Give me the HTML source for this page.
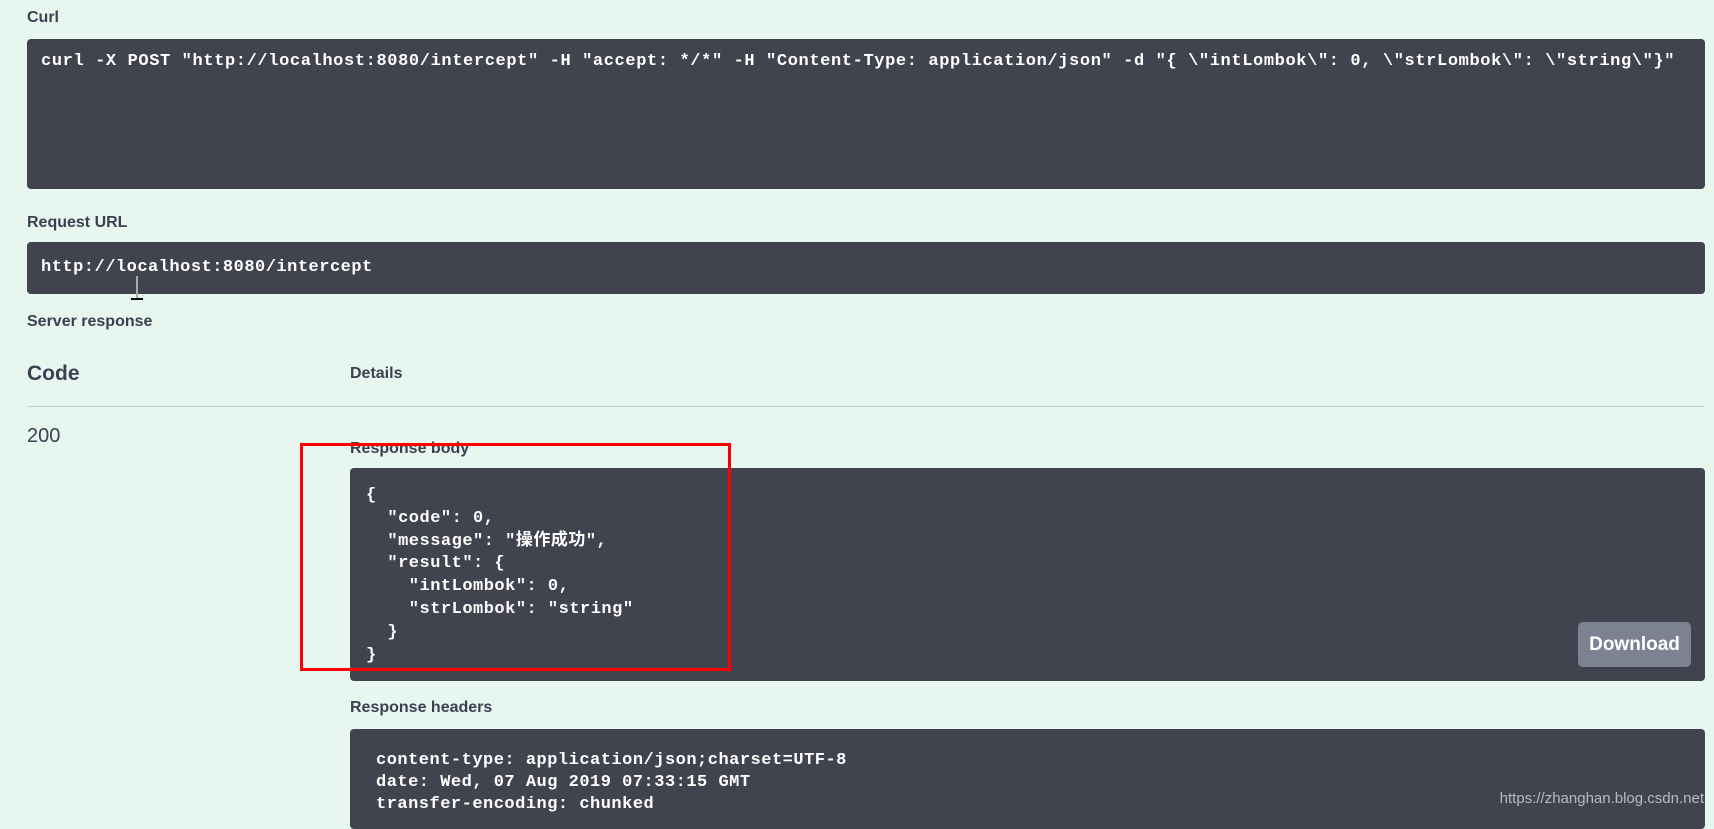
<!DOCTYPE html>
<html><head><meta charset="utf-8"><style>
*{margin:0;padding:0;box-sizing:border-box}
html,body{width:1714px;height:818px;overflow:hidden;background:#e8f6f0;font-family:"Liberation Sans","Noto Sans CJK SC",sans-serif;color:#3b4151}
.lbl{position:absolute;font-weight:bold;font-size:16px;color:#3b4151}
.box{position:absolute;background:#41444e;border-radius:4px}
.mono{font-family:"Liberation Mono","Noto Sans CJK SC",monospace;font-weight:bold;font-size:17px;color:#fff;letter-spacing:0.5px;white-space:pre;position:absolute}
</style></head><body>
<div class="lbl" style="left:27px;top:9px">Curl</div>
<div class="box" style="left:27px;top:39px;width:1678px;height:150px"></div>
<div class="mono" style="left:41px;top:52px;letter-spacing:0.62px">curl -X POST "http://localhost:8080/intercept" -H "accept: */*" -H "Content-Type: application/json" -d "{ \"intLombok\": 0, \"strLombok\": \"string\"}"</div>
<div class="lbl" style="left:27px;top:214px">Request URL</div>
<div class="box" style="left:27px;top:242px;width:1678px;height:52px"></div>
<div class="mono" style="left:41px;top:258px">http://localhost:8080/intercept</div>
<div style="position:absolute;left:136px;top:276px;width:2px;height:22px;background:#aaa"></div>
<div style="position:absolute;left:131px;top:298px;width:12px;height:2px;background:#000"></div>
<div class="lbl" style="left:27px;top:313px">Server response</div>
<div class="lbl" style="left:27px;top:362px;font-size:21px">Code</div>
<div class="lbl" style="left:350px;top:365px">Details</div>
<div style="position:absolute;left:27px;top:406px;width:1678px;height:1px;background:#c8d0cc"></div>
<div style="position:absolute;left:27px;top:425px;font-size:20px">200</div>
<div class="lbl" style="left:350px;top:440px">Response body</div>
<div class="box" style="left:350px;top:468px;width:1355px;height:213px"></div>
<div class="mono" style="left:366px;top:485px;line-height:22.8px">{
  "code": 0,
  "message": "操作成功",
  "result": {
    "intLombok": 0,
    "strLombok": "string"
  }
}</div>
<div style="position:absolute;left:1578px;top:622px;width:113px;height:45px;background:#7d8293;border-radius:5px;color:#fff;font-weight:bold;font-size:19px;text-align:center;line-height:45px">Download</div>
<div style="position:absolute;left:300px;top:443px;width:431px;height:228px;border:3px solid #f00"></div>
<div class="lbl" style="left:350px;top:699px">Response headers</div>
<div class="box" style="left:350px;top:729px;width:1355px;height:100px"></div>
<div class="mono" style="left:376px;top:750px;line-height:22px">content-type: application/json;charset=UTF-8
date: Wed, 07 Aug 2019 07:33:15 GMT
transfer-encoding: chunked</div>
<div style="position:absolute;right:10px;top:790px;font-size:15px;color:#b8bac0">https://zhanghan.blog.csdn.net</div>
</body></html>
